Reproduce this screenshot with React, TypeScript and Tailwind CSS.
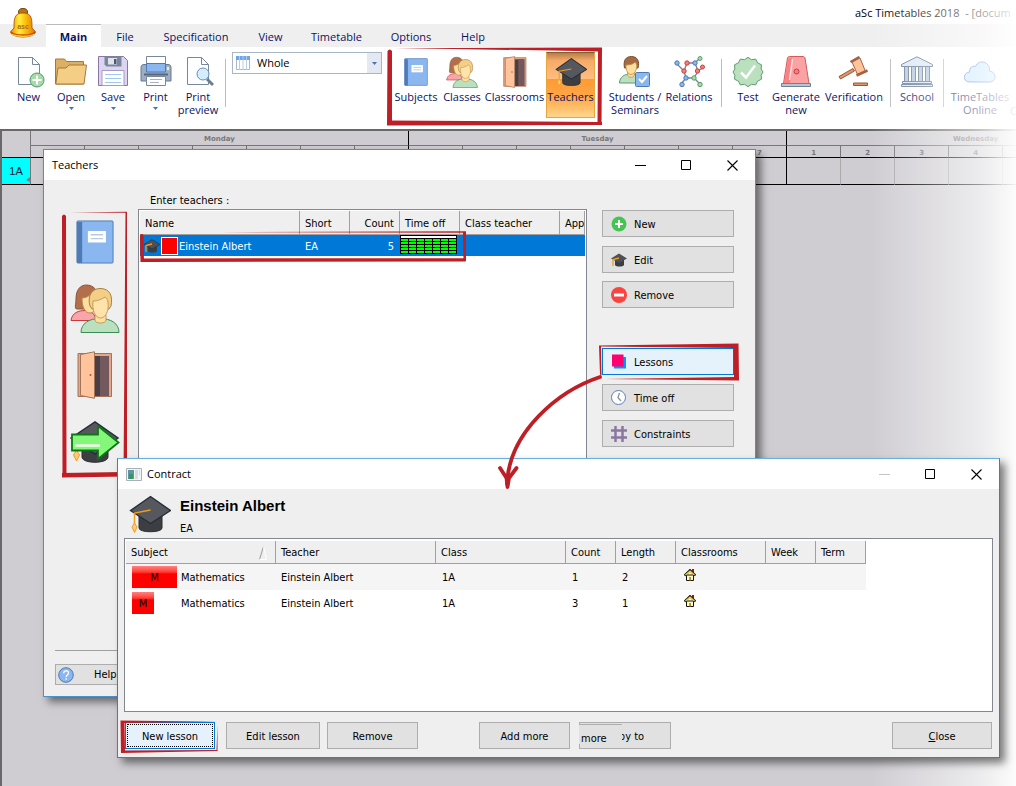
import type { ReactNode } from "react";

/* ---------- icons ---------- */

function CapIcon({ className }: { className: string }) {
  return (
    <svg viewBox="0 0 42 38" className={className} aria-hidden="true">
      <path d="M10 19v14c0 5 23 5 23 0V19z" fill="#3d3e42" stroke="#2c2d30" />
      <path d="M1.500 15.500 21.500 1.500l20 14-20 13z" fill="#56585d" stroke="#242e3a" strokeWidth="1.400" />
      <path d="M21.500 15 5.500 18v11" fill="none" stroke="#ef9c22" strokeWidth="1.400" />
      <path d="M5.500 28l-2.500 4 2.500 5.500 2.500-5.500z" fill="#ffc978" stroke="#ef9c22" />
    </svg>
  );
}

function SmallCapIcon({ className }: { className: string }) {
  return (
    <svg viewBox="0 0 16 16" className={className} aria-hidden="true">
      <path d="M4 8v5c1 2 8 2 9 0V8z" fill="#3d3e42" />
      <path d="M0 6.500 8 1.500l8 5-8 4.500z" fill="#4d5056" stroke="#242e3a" strokeWidth=".6" />
      <path d="M8 6 2 7.500V14" fill="none" stroke="#ef9c22" strokeWidth="1.300" />
    </svg>
  );
}

function BookIcon({ className }: { className: string }) {
  return (
    <svg viewBox="0 0 40 46" className={className} aria-hidden="true" preserveAspectRatio="none">
      <rect x="1" y="1" width="38" height="44" rx="1" fill="#8bb7f0" stroke="#4e7ab5" />
      <path d="M1 2h5.500v43H2l-1-1z" fill="#4e7ab5" />
      <path d="M12.500 11.500h19v12h-19z" fill="#fff" />
      <path d="M15.500 15.500h13M15.500 19.500h13" stroke="#b9c9de" strokeWidth="1.500" />
    </svg>
  );
}

function PeopleIcon({ className }: { className: string }) {
  return (
    <svg viewBox="0 0 50 50" className={className} aria-hidden="true">
      <path d="M1 37.500c1-8 8-10 14-10s10 3 11 10z" fill="#f8a6a9" stroke="#c8383d" />
      <path d="M7 26c-3 0-1-4-1-10C6 7 10 2 16.500 2S28 7 28 14v12z" fill="#b36f4b" stroke="#8a5638" />
      <path d="M12 15c4 0 7-2 9-4l6 5v8c-2 4-4 6-7 6-5 0-8-6-8-15z" fill="#ffdfa0" stroke="#b98b4a" />
      <path d="M11 49.500c0-9 8-14 19-14s19 5 19 14z" fill="#bae0bd" stroke="#3d8b58" />
      <path d="M25 32v5c0 4 11 4 11 0v-5z" fill="#ffdfa0" stroke="#b98b4a" strokeWidth=".8" />
      <path d="M20 23c-3-10 2-18 11-17.500C40 6 43 13 41 23l-2 3H22z" fill="#f5ce85" stroke="#a5824a" />
      <path d="M23 18c5 0 9-2 12-4 2 1 3 3 3 6 1 7-2 15-7.500 15C25 35 22 27 23 18z" fill="#ffe3ab" stroke="#b98b4a" strokeWidth=".8" />
    </svg>
  );
}

function DoorIcon({ className }: { className: string }) {
  return (
    <svg viewBox="0 0 36 48" className={className} aria-hidden="true" preserveAspectRatio="none">
      <path d="M1 2.500h33.500v43H1z" fill="#e5a685" stroke="#a1735a" />
      <path d="M17 5h15v40H17z" fill="#4a3e42" />
      <path d="M23 5h9v40h-9z" fill="#73595e" />
      <path d="M3.500 3.500 17.500.800v46.500L3.500 44.500z" fill="#ffc49c" stroke="#a1735a" />
      <circle cx="13.500" cy="24" r="1" fill="#9a5c43" />
    </svg>
  );
}

function ArrowCapIcon() {
  return (
    <svg viewBox="0 0 50 42" className="h-[42px] w-[50px]" aria-hidden="true">
      <path d="M12 20v16c0 7 26 7 26 0V20z" fill="#3d3e42" stroke="#2c2d30" />
      <path d="M1 17 25 1l23 16-23 16z" fill="#56585d" stroke="#242e3a" strokeWidth="1.500" />
      <path d="M6.500 29 3.500 34l3 6 3-6z" fill="#ffc978" stroke="#ef9c22" />
      <path d="M2 13.500h26V5l20.500 16.500L28 38v-8.500H2z" fill="#84f77a" stroke="#0b7812" strokeWidth="1.800" />
      <path d="M5 24.500h25" stroke="#f4fff2" strokeWidth="2.500" />
    </svg>
  );
}

function BellLogo() {
  return (
    <svg viewBox="0 0 26 30" className="h-[30px] w-[26px]" aria-hidden="true">
      <defs>
        <linearGradient id="bell" x1="0" x2="1">
          <stop offset="0" stopColor="#f08a00" />
          <stop offset=".35" stopColor="#fff03a" />
          <stop offset=".65" stopColor="#fbb40c" />
          <stop offset="1" stopColor="#d97a00" />
        </linearGradient>
      </defs>
      <ellipse cx="13" cy="4" rx="4.500" ry="3.500" fill="#b87414" stroke="#6f4510" />
      <path d="M4 20C4 11 4 5 13 5s9 6 9 15l3.300 3.500c1 3-5.500 5.500-12.300 5.500S-.200 26.500.700 23.500z" fill="url(#bell)" stroke="#a8480c" strokeWidth=".8" />
      <path d="M.900 24c4.600 4 19.500 4 24.200 0" fill="none" stroke="#c8500a" strokeWidth="1.300" />
      <path d="M2 26.500c5 2.500 17 2.500 22 0" fill="none" stroke="#ffcf3a" />
      <text x="13" y="20.500" textAnchor="middle" fontSize="7" fontWeight="700" fill="#b36a10" fontFamily="Liberation Sans, sans-serif">asc</text>
    </svg>
  );
}

function RibbonSvg({ children }: { children: ReactNode }) {
  return (
    <svg viewBox="0 0 32 32" className="h-8 w-8 shrink-0" aria-hidden="true">
      {children}
    </svg>
  );
}

const page = (
  <path d="M2.500 1.500h14l7 7v20h-21z M16.500 1.500v7h7" fill="#fdfeff" stroke="#78889a" />
);

const icons: Record<string, ReactNode> = {
  newDoc: (
    <RibbonSvg>
      <g transform="translate(3 0)">
        {page}
        <circle cx="21" cy="24" r="7" fill="#a9dba9" stroke="#4f9c68" />
        <path d="M21 19.500v9M16.500 24h9" stroke="#fff" strokeWidth="2" />
      </g>
    </RibbonSvg>
  ),
  open: (
    <RibbonSvg>
      <path d="M.500 28V3h9l2 2.500h17V28z" fill="#dbb065" stroke="#a5783a" />
      <path d="M.800 28 3 12h8l3-3h17.500L29 28z" fill="#f5ce85" stroke="#a5783a" />
    </RibbonSvg>
  ),
  save: (
    <RibbonSvg>
      <path d="M1.500.500h25l4 4v25h-29z" fill="#dcd5f2" stroke="#8b75a1" />
      <path d="M7.500.500h17v10h-15l-2-2z" fill="#78889a" />
      <path d="M11 2h9v6.500h-9z" fill="#dde4ee" />
      <path d="M17 3h2.500v5H17z" fill="#4b5a6c" />
      <path d="M5 14.500h22v15H5z" fill="#fff" stroke="#a99bc0" />
      <path d="M8 18.500h16M8 22.500h16M8 26.500h16" stroke="#9fc8f5" />
    </RibbonSvg>
  ),
  print: (
    <RibbonSvg>
      <path d="M6.500.500h19v8h-19z" fill="#fff" stroke="#78889a" />
      <path d="M4 8.500h24c2 0 3 1 3 3V25H1V11.500c0-2 1-3 3-3z" fill="#9baec4" stroke="#66798f" />
      <path d="M6.500 7.500h19v8.500h-19z" fill="#8bb7f0" stroke="#4e7ab5" />
      <path d="M4 18.500h24" stroke="#56687c" strokeWidth="2" />
      <path d="M6.500 20.500h19v9h-19z" fill="#fff" stroke="#78889a" />
      <path d="M10 23.500h12M10 26.500h9" stroke="#a5b3c2" />
      <path d="M27 11h2v3h-2z" fill="#ffeea3" />
    </RibbonSvg>
  ),
  preview: (
    <RibbonSvg>
      <g transform="translate(3 0)">
        {page}
        <path d="m22 23 6 6" stroke="#6d7d90" strokeWidth="3" />
        <circle cx="18" cy="18" r="6" fill="#d4edff" stroke="#6c8eb4" />
      </g>
    </RibbonSvg>
  ),
  students: (
    <RibbonSvg>
      <path d="M.500 27c0-6 5-9 11-9s11 3 11 9z" fill="#bae0bd" stroke="#5b9b70" />
      <path d="M8.500 15v4c1 3 6 3 7 0v-4z" fill="#ffdfa0" stroke="#b98b4a" strokeWidth=".7" />
      <path d="M5.500 12C4 4 7 .500 12.500.500S21 5 19 12z" fill="#a56a44" stroke="#7a4d30" />
      <path d="M7 9c4 0 8-1 9-3 2 2 2.500 5 1 8-1 3-3 4.500-5 4.500C9 18.500 6.500 14 7 9z" fill="#ffdf9c" stroke="#b98b4a" strokeWidth=".8" />
      <rect x="16.500" y="16.500" width="14" height="14" rx="1" fill="#8bb7f0" stroke="#4e7ab5" />
      <path d="m20 23 3 3 5-6" fill="none" stroke="#fff" strokeWidth="2" />
    </RibbonSvg>
  ),
  relations: (
    <RibbonSvg>
      <path d="M3 7l8 8M11 15l3-8h8l3 8-4 7h-8zM22 7l5-5M25 15l6-4M21 22l6 6M13 22l-5 6" fill="none" stroke="#7a828e" strokeWidth="1.300" />
      <g fill="#f47d80" stroke="#c74343">
        <circle cx="14" cy="7" r="2.200" /><circle cx="11" cy="15" r="2.200" /><circle cx="24.500" cy="15" r="2.200" /><circle cx="29.500" cy="11" r="2" />
      </g>
      <g fill="#8bb7f0" stroke="#4e7ab5">
        <circle cx="22" cy="7" r="2.200" /><circle cx="13" cy="22" r="2.200" /><circle cx="4" cy="7" r="2.200" /><circle cx="9" cy="28.500" r="2.200" />
      </g>
      <g fill="#a9dba9" stroke="#5b9b70">
        <circle cx="27" cy="2.500" r="2" /><circle cx="21" cy="22" r="2.200" /><circle cx="27" cy="28.500" r="2.200" />
      </g>
    </RibbonSvg>
  ),
  test: (
    <RibbonSvg>
      <path d="M16 1.300l3.500 2.400 4.200-.6 1.900 3.800 3.900 1.900-.4 4.200 1.900 3-1.900 3.200.4 4-3.900 1.900-1.900 3.800-4.200-.6L16 30.700l-3.500-2.400-4.200.6-1.900-3.800-3.900-1.900.4-4L1 16l1.900-3-.4-4.200 3.900-1.900 1.900-3.800 4.200.6z" fill="#bae0bd" stroke="#5e9c76" />
      <path d="m9 16.500 5 5 9-12" fill="none" stroke="#fff" strokeWidth="2.500" />
    </RibbonSvg>
  ),
  generate: (
    <RibbonSvg>
      <path d="M3.500 27.500 7.500 2c.3-1 1-1.500 2-1.500H23c1 0 1.700.500 2 1.500l4 25.500z" fill="#f9a3a5" stroke="#d45a5d" />
      <path d="M4 27 8 3l4-2-2 26z" fill="#fb8284" />
      <path d="M12.500 3 9.500 24" stroke="#fff" strokeWidth="1.500" opacity=".7" />
      <circle cx="16.500" cy="15.500" r="2.500" fill="#f47d80" stroke="#c83c40" />
      <path d="M1.500 27.500h29v3h-29z" fill="#b5c5d3" stroke="#6d8296" />
    </RibbonSvg>
  ),
  verification: (
    <RibbonSvg>
      <path d="M1 20.500 15 12.500l1.500 2.500L2.500 23z" fill="#e09467" stroke="#96593c" />
      <path d="m14 6 8-4 5.500 13.500-8 3z" fill="#ffc49c" stroke="#a16344" />
      <path d="M12.500 6 21.500 1M18.500 19.500l11-5" stroke="#a16344" strokeWidth="2.500" />
      <path d="M15.500 27h14v2.500h-14z" fill="#e09467" stroke="#96593c" />
    </RibbonSvg>
  ),
  school: (
    <RibbonSvg>
      <path d="M.500 8.500 16 .800l15.500 7.700v2H.500z" fill="#dce8f5" stroke="#6b7f96" />
      <g fill="#b6c9de" stroke="#6b7f96">
        <path d="M3.500 10.500h4v15h-4zM10.500 10.500h4v15h-4zM17.500 10.500h4v15h-4zM24.500 10.500h4v15h-4z" />
        <path d="M1.500 25.500h29v2h-29zM.500 28.500h31v2H.500z" fill="#dce8f5" />
      </g>
    </RibbonSvg>
  ),
  cloud: (
    <RibbonSvg>
      <path d="M6 26c-7.500 0-7.500-9-.500-10 0-4.500 3-6.500 6-5.500 3.500-8 14.500-5 14 4.500 7.500 1 7.500 11 0 11z" fill="#c4e6ff" stroke="#5a86c8" />
    </RibbonSvg>
  ),
  subjects: <BookIcon className="my-0.5 h-7 w-6" />,
  classes: <PeopleIcon className="h-8 w-8" />,
  classrooms: <DoorIcon className="h-8 w-6" />,
  teachers: <CapIcon className="h-8 w-8" />,
};

function HouseIcon() {
  return (
    <svg viewBox="0 0 12 12" className="h-3 w-3" aria-hidden="true">
      <path d="M2.500 6h7v5.500h-7z" fill="#fffbd0" stroke="#111" />
      <path d="M8 0h2v4L8 2z" fill="#a01818" />
      <path d="M.500 6.500 6 1.200l5.500 5.300" fill="none" stroke="#111" strokeWidth="2.200" />
      <path d="M1.500 6 6 2l4.500 4" fill="none" stroke="#f5dc2c" strokeWidth="1.300" />
      <path d="M5.200 8h1.800v3.500H5.200z" fill="#c9890b" />
    </svg>
  );
}

/* ---------- ribbon ---------- */

type RibbonItem = { icon: string; label: string; size: string; menu?: boolean; active?: boolean };

function RibbonButton({ icon, label, size, menu, active }: RibbonItem) {
  const look = active
    ? "border-[#e8a53c] border-t-[#7b6233] bg-[linear-gradient(#b97c48_0%,#f5ab69_12%,#ffbd80_40%,#ff9a33_41%,#ffa848_70%,#ffd58c_100%)]"
    : "border-transparent";
  return (
    <button
      type="button"
      className={`flex h-[66px] shrink-0 flex-col items-center border pt-[3px] text-[11px] leading-[13px] text-[#0b1263] ${size} ${look}`}
    >
      {icons[icon]}
      <span className="mt-0.5 text-center whitespace-pre">{label}</span>
      {menu && (
        <svg viewBox="0 0 5 3" className="mt-1 h-[3px] w-[5px]" aria-hidden="true">
          <path d="M0 0h5L2.500 3z" fill="#4872b8" />
        </svg>
      )}
    </button>
  );
}

function Separator() {
  return <div className="mx-1.5 mt-[7px] h-12 w-px shrink-0 bg-[#bcbcbc]" />;
}

const fileItems: RibbonItem[] = [
  { icon: "newDoc", label: "New", size: "w-[43px]" },
  { icon: "open", label: "Open", size: "w-[42px]", menu: true },
  { icon: "save", label: "Save", size: "w-[42px]", menu: true },
  { icon: "print", label: "Print", size: "w-[43px]", menu: true },
  { icon: "preview", label: "Print\npreview", size: "w-[42px]" },
];
const dataItems: RibbonItem[] = [
  { icon: "subjects", label: "Subjects", size: "w-[50px]" },
  { icon: "classes", label: "Classes", size: "w-[42px]" },
  { icon: "classrooms", label: "Classrooms", size: "w-[63px]" },
  { icon: "teachers", label: "Teachers", size: "w-[49px]", active: true },
];
const peopleItems: RibbonItem[] = [
  { icon: "students", label: "Students /\nSeminars", size: "w-[56px]" },
  { icon: "relations", label: "Relations", size: "w-[52px]" },
];
const runItems: RibbonItem[] = [
  { icon: "test", label: "Test", size: "w-[40px]" },
  { icon: "generate", label: "Generate\nnew", size: "w-[56px]" },
  { icon: "verification", label: "Verification", size: "w-[60px]" },
];

function Ribbon() {
  return (
    <div className="flex h-[82px] overflow-hidden bg-white pt-[5px] pl-[7px]">
      {fileItems.map((i) => <RibbonButton key={i.label} {...i} />)}
      <Separator />
      <label className="flex h-[22px] w-[150px] shrink-0 items-center border border-[#a9b6ca] text-[11px]">
        <svg viewBox="0 0 14 14" className="ml-[3px] h-3.5 w-3.5 shrink-0" aria-hidden="true">
          <path d="M.500.500h13v13H.500z" fill="#fff" stroke="#a8b8c8" />
          <path d="M0 0h14v4H0z" fill="#6aa6e8" />
          <path d="M3.500 0v14M7 0v14M10.500 0v14" stroke="#b9cde2" />
        </svg>
        <select aria-label="View" className="ml-[7px] min-w-0 flex-1 appearance-none bg-transparent text-[#000]">
          <option>Whole</option>
        </select>
        <span className="flex h-full w-3.5 items-center justify-center bg-[#e3e8f1]">
          <svg viewBox="0 0 5 3" className="h-[3px] w-[5px]" aria-hidden="true">
            <path d="M0 0h5L2.500 3z" fill="#4872b8" />
          </svg>
        </span>
      </label>
      <div className="ml-[9px] flex shrink-0">
        {dataItems.map((i) => <RibbonButton key={i.label} {...i} />)}
      </div>
      <div className="ml-3 flex shrink-0">
        {peopleItems.map((i) => <RibbonButton key={i.label} {...i} />)}
      </div>
      <Separator />
      {runItems.map((i) => <RibbonButton key={i.label} {...i} />)}
      <Separator />
      <RibbonButton icon="school" label="School" size="w-[40px]" />
      <Separator />
      <RibbonButton icon="cloud" label={"TimeTables\nOnline"} size="w-[60px]" />
      <button type="button" className="h-[66px] shrink-0 pt-[51px] text-[11px] leading-[13px] text-[#0b1263]">C</button>
    </div>
  );
}

/* ---------- timetable ---------- */

const days = ["Monday", "Tuesday", "Wednesday"];
const periods = [1, 2, 3, 4, 5, 6, 7];

function Timetable() {
  return (
    <div className="flex-1 overflow-hidden border-t-2 border-l-2 border-[#686868] bg-[#cfcdd2]">
      <table className="w-[1163px] table-fixed border-separate border-spacing-0 font-['DejaVu_Sans'] text-[7px] leading-none font-bold text-[#777]">
        <colgroup>
          <col className="w-[29px]" />
          {days.map((d) => periods.map((p) => <col key={d + p} className="w-[54px]" />))}
        </colgroup>
        <thead>
          <tr className="h-[15px]">
            <th rowSpan={2} className="border-r border-b border-r-[#777] border-b-black p-0" />
            {days.map((d) => (
              <th key={d} colSpan={7} className="border-r border-b border-r-black border-b-[#777] p-0 pt-0.5">{d}</th>
            ))}
          </tr>
          <tr className="h-3">
            {days.map((d) =>
              periods.map((p) => (
                <th key={d + p} className={`border-r border-b border-b-black p-0 pt-[3px] ${p === 7 ? "border-r-black" : "border-r-[#777]"}`}>{p}</th>
              ))
            )}
          </tr>
        </thead>
        <tbody>
          <tr className="h-[27px]">
            <th className="border-r border-b border-r-[#777] border-b-black bg-[#0ff] p-0 font-['Liberation_Sans'] text-[11px] font-normal text-[#123]">
              <div className="relative flex h-[26px] items-center justify-center">
                1A
                <svg viewBox="0 0 4 5" className="absolute right-0 bottom-0.5 h-[5px] w-1" aria-hidden="true">
                  <path d="M4 0v5L0 3z" fill="#808080" />
                </svg>
              </div>
            </th>
            {days.map((d) =>
              periods.map((p) => (
                <td key={d + p} className={`border-r border-b border-b-black p-0 ${p === 7 ? "border-r-black" : "border-r-[#aaa]"}`} />
              ))
            )}
          </tr>
        </tbody>
      </table>
    </div>
  );
}

/* ---------- windows ---------- */

function WindowControls({ dimMin }: { dimMin?: boolean }) {
  return (
    <div className="ml-auto flex h-full">
      <button type="button" aria-label="Minimize" className="flex w-[46px] items-center justify-center">
        <svg viewBox="0 0 11 11" className="h-[11px] w-[11px]"><path d="M0 5.500h11" stroke={dimMin ? "#c4c4c4" : "#000"} /></svg>
      </button>
      <button type="button" aria-label="Maximize" className="flex w-[46px] items-center justify-center">
        <svg viewBox="0 0 11 11" className="h-[11px] w-[11px]"><path d="M.500.500h9v9h-9z" fill="none" stroke="#000" /></svg>
      </button>
      <button type="button" aria-label="Close window" className="flex w-[46px] items-center justify-center">
        <svg viewBox="0 0 11 11" className="h-[11px] w-[11px]"><path d="m.500.500 10 10m0-10-10 10" stroke="#000" strokeWidth="1.100" /></svg>
      </button>
    </div>
  );
}

const head = "border-r border-b border-[#a0a0a0] bg-[#efefef] p-0 pt-0.5 pl-[5px] text-left font-normal whitespace-nowrap overflow-hidden";

function TimeOffGrid() {
  return (
    <svg viewBox="0 0 57 19" className="h-[19px] w-[57px]" aria-hidden="true">
      <path d="M0 0h57v19H0z" fill="#000" />
      <path d="M1 1h55v2H1z" fill="#fff" />
      {[0, 1, 2, 3, 4].map((r) =>
        periods.map((c) => (
          <rect key={`${r}-${c}`} x={1 + (c - 1) * 8} y={4 + r * 3} width="7" height="2" fill="#0f0" />
        ))
      )}
    </svg>
  );
}

function SideButton({ label, gap, hot, children }: { label: string; gap: string; hot?: boolean; children: ReactNode }) {
  return (
    <button
      type="button"
      className={`flex h-[27px] items-center border pl-2 ${gap} ${hot ? "border-[#0078d7] bg-[#e5f1fb]" : "border-[#adadad] bg-[#e1e1e1]"}`}
    >
      <svg viewBox="0 0 16 16" className="mr-[7px] h-4 w-4" aria-hidden="true">{children}</svg>
      <span className="pt-0.5">{label}</span>
    </button>
  );
}

function TeachersWindow() {
  return (
    <section className="absolute top-[149px] left-[43px] w-[713px] border border-[#4a90cc] bg-[#efefef] shadow-[5px_5px_8px_rgba(0,0,0,0.5)]">
      <header className="flex h-[30px] items-center bg-white pl-2 font-['Open_Sans']">
        <h2 className="text-[11px]">Teachers</h2>
        <WindowControls />
      </header>
      <div className="flex">
        <nav className="flex w-[94px] shrink-0 flex-col items-center pt-[39px] pl-2">
          <button type="button" aria-label="Subjects" className="py-px"><BookIcon className="h-11 w-[38px]" /></button>
          <button type="button" aria-label="Classes" className="mt-[18px]"><PeopleIcon className="h-[50px] w-[50px]" /></button>
          <button type="button" aria-label="Classrooms" className="mt-[18px]"><DoorIcon className="h-12 w-9" /></button>
          <button type="button" aria-label="Teachers" className="mt-[22px]"><ArrowCapIcon /></button>
        </nav>
        <div className="min-w-0 flex-1 pt-[13px]">
          <p className="h-4 pl-3 leading-4">Enter teachers :</p>
          <div className="h-[431px] overflow-hidden border border-[#828790] bg-white px-px pt-px">
            <table className="w-full table-fixed border-separate border-spacing-0">
              <colgroup>
                <col className="w-[160px]" /><col className="w-[50px]" /><col className="w-[50px]" />
                <col className="w-[60px]" /><col className="w-[100px]" /><col />
              </colgroup>
              <thead>
                <tr className="h-6">
                  <th className={head}>Name</th>
                  <th className={head}>Short</th>
                  <th className={`${head} pr-[5px] text-right!`}>Count</th>
                  <th className={head}>Time off</th>
                  <th className={head}>Class teacher</th>
                  <th className={head}>App</th>
                </tr>
              </thead>
              <tbody>
                <tr className="h-[21px] bg-[#0078d7] text-white">
                  <td className="p-0">
                    <div className="flex items-center pl-1 whitespace-nowrap">
                      <SmallCapIcon className="h-4 w-4" />
                      <span className="mr-px ml-px h-[18px] w-[17px] border border-white bg-[#f00]" />
                      <span className="pt-0.5">Einstein Albert</span>
                    </div>
                  </td>
                  <td className="p-0 pt-0.5 pl-[5px]">EA</td>
                  <td className="p-0 pt-0.5 pr-1.5 text-right">5</td>
                  <td className="p-0 align-top"><TimeOffGrid /></td>
                  <td className="p-0" />
                  <td className="p-0" />
                </tr>
              </tbody>
            </table>
          </div>
        </div>
        <div className="mr-[21px] ml-[15px] flex w-[132px] shrink-0 flex-col pt-[30px]">
          <SideButton label="New" gap="mt-0">
            <circle cx="8" cy="8" r="7.500" fill="#45c353" /><path d="M8 4v8M4 8h8" stroke="#fff" strokeWidth="2" />
          </SideButton>
          <SideButton label="Edit" gap="mt-[9px]">
            <path d="M4 8v5c1 2 8 2 9 0V8z" fill="#3d3e42" />
            <path d="M0 6.500 8 1.500l8 5-8 4.500z" fill="#4d5056" />
            <path d="M8 6 2 7.500V14" fill="none" stroke="#ef9c22" strokeWidth="1.300" />
          </SideButton>
          <SideButton label="Remove" gap="mt-2">
            <circle cx="8" cy="8" r="8" fill="#fb4340" /><path d="M3 6.500h10v3H3z" fill="#fff" />
          </SideButton>
          <SideButton label="Lessons" gap="mt-[40px]" hot>
            <path d="M3 3h12v11.500H3z" fill="#0096ff" /><path d="M1 0.500h11.500v12H1z" fill="#ff006e" />
          </SideButton>
          <SideButton label="Time off" gap="mt-[9px]">
            <circle cx="7.500" cy="7.500" r="7" fill="#fff" stroke="#5a7fb8" /><path d="M8.500 3 7 7.500l3 3.500" fill="none" stroke="#8b93a0" strokeWidth="1.300" />
          </SideButton>
          <SideButton label="Constraints" gap="mt-[9px]">
            <path d="M4.500 0v16M11.500 0v16M0 4.500h16M0 11.500h16" stroke="#8b75a1" strokeWidth="2.500" />
          </SideButton>
        </div>
      </div>
      <footer className="mx-[11px] mt-2.5 border-t border-[#a0a0a0] pb-[11px]">
        <button type="button" className="mt-[13px] flex h-[21px] w-[94px] items-center border border-[#adadad] bg-[#e1e1e1] pl-0.5">
          <svg viewBox="0 0 16 16" className="mr-5 h-4 w-4" aria-hidden="true">
            <circle cx="8" cy="8" r="7.300" fill="#8bb7f0" stroke="#4e7ab5" />
            <path d="M5.700 6.200C5.700 3 10.500 3 10.500 6c0 2-2.300 2-2.300 4M8.200 11.300v1.500" fill="none" stroke="#fff" strokeWidth="1.300" />
          </svg>
          Help
        </button>
      </footer>
    </section>
  );
}

const lessons = [
  { block: "w-[45px]", count: 1, length: 2, row: "bg-[#f5f5f5]" },
  { block: "w-[22px]", count: 3, length: 1, row: "bg-white" },
];

const push = "h-[27px] border border-[#adadad] bg-[#e1e1e1] pt-0.5";

function ContractWindow() {
  return (
    <section className="absolute top-[458px] right-4 left-[117px] border border-[#2b84cc] border-t-[#6aaee2] bg-[#efefef] shadow-[5px_5px_8px_rgba(0,0,0,0.5)]">
      <header className="flex h-[30px] items-center bg-white pl-2 font-['Open_Sans']">
        <svg viewBox="0 0 16 13" className="mr-[5px] h-[13px] w-4" aria-hidden="true">
          <path d="M.500.500h15v12H.500z" fill="#f4f4f4" stroke="#a8b0b8" />
          <path d="M2 2h6v9H2z" fill="#5a98a0" /><path d="M3 6h4v5H3z" fill="#3f9268" /><path d="M9 2h3v9H9zM13 2h1v5h-1z" fill="#d5dde3" />
        </svg>
        <h2 className="text-[11px]">Contract</h2>
        <WindowControls dimMin />
      </header>
      <div className="flex h-[49px] pt-1.5 pl-[11px]">
        <CapIcon className="h-[38px] w-[42px]" />
        <div className="pl-[9px]">
          <h1 className="h-[26px] font-['Liberation_Sans'] text-[15px] leading-[22px] font-bold">Einstein Albert</h1>
          <p className="leading-4">EA</p>
        </div>
      </div>
      <div className="mx-1.5 h-[174px] border border-[#828790] bg-white pt-0.5 pl-px">
        <table className="w-[740px] table-fixed border-separate border-spacing-0">
          <colgroup>
            <col className="w-[150px]" /><col className="w-[160px]" /><col className="w-[130px]" /><col className="w-[50px]" />
            <col className="w-[60px]" /><col className="w-[90px]" /><col className="w-[50px]" /><col className="w-[50px]" />
          </colgroup>
          <thead>
            <tr className="h-[23px]">
              <th className={head}>
                <div className="flex items-center justify-between pr-2">
                  Subject
                  <svg viewBox="0 0 8 14" className="h-3.5 w-2" aria-hidden="true">
                    <path d="M.500 13.500 4.500.500" stroke="#999" /><path d="m4.500.500 3 13H.500" fill="none" stroke="#fff" />
                  </svg>
                </div>
              </th>
              {["Teacher", "Class", "Count", "Length", "Classrooms", "Week", "Term"].map((h) => (
                <th key={h} className={head}>{h}</th>
              ))}
            </tr>
          </thead>
          <tbody>
            {lessons.map((l) => (
              <tr key={l.count} className={`h-[26px] ${l.row}`}>
                <td className="p-0 pl-1.5">
                  <div className="flex items-center">
                    <span className="w-[49px]">
                      <span className={`block h-[22px] bg-linear-to-b from-[#ff8080] to-[#f00] to-35% pt-px text-center leading-[22px] ${l.block}`}>M</span>
                    </span>
                    <span className="pt-0.5">Mathematics</span>
                  </div>
                </td>
                <td className="p-0 pt-0.5 pl-[5px]">Einstein Albert</td>
                <td className="p-0 pt-0.5 pl-1.5">1A</td>
                <td className="p-0 pt-0.5 pl-1.5">{l.count}</td>
                <td className="p-0 pt-0.5 pl-1.5">{l.length}</td>
                <td className="p-0 pb-1 pl-2"><HouseIcon /></td>
                <td className="p-0" />
                <td className="p-0" />
              </tr>
            ))}
          </tbody>
        </table>
      </div>
      <footer className="flex pt-[10px] pr-[7px] pb-2 pl-[7px]">
        <button type="button" className="h-[27px] w-[90px] border border-[#0078d7] bg-[#e5f1fb] p-px">
          <span className="flex h-full items-center justify-center border border-dotted border-black pt-0.5">New lesson</span>
        </button>
        <button type="button" className={`${push} ml-[11px] w-[94px]`}>Edit lesson</button>
        <button type="button" className={`${push} ml-[7px] w-[91px]`}>Remove</button>
        <button type="button" className={`${push} ml-[61px] w-[91px]`}>Add more</button>
        <div className="relative ml-[9px]">
          <button type="button" className={`${push} w-[92px]`}>Copy to</button>
          <span className="absolute top-[2px] left-0 h-5 w-[43px] border-t border-[#adadad] bg-[#e1e1e1] pt-0.5 pl-0.5 leading-6">more</span>
        </div>
        <button type="button" className={`${push} ml-auto w-[100px]`}><u>C</u>lose</button>
      </footer>
    </section>
  );
}

/* ---------- hand-drawn highlights ---------- */

function StripHighlight() {
  return (
    <svg viewBox="0 0 70 270" className="pointer-events-none absolute top-[210px] left-[60px] h-[270px] w-[70px]" aria-hidden="true">
      <path d="M2 6q2-3 4 0l.5 261H2.500zM2 263l60-1 5 1v3.500L2 267.500zM10 2.500l57-.8v265h-3.500L65.500 2.700z" fill="#be1e25" />
    </svg>
  );
}

function Highlights() {
  return (
    <svg viewBox="0 0 1016 786" className="pointer-events-none absolute top-0 left-0 h-[786px] w-[1016px]" aria-hidden="true">
      <g fill="#be1e25">
        <path d="M387.500 51q2-3 4.500 0v74h-5z M387 120.500l211 1.500h4v3l-215 .500z M395 48.200l207-.7-.5 77h-4l.5-73q-100-2-203-3.300z" />
        <path d="M140 235q2-2 3.500 0l.5 27h-3.500z M141 258.500l324-.5v3.500l-324 .500z M220 232.200l246-1v30h-2.500l-.5-28.500z" />
        <path d="M599 345.500l139.500-2 .5 37-134-1.500 129-2-.5-29-132.500-1.500.5 29-1.500-1z" />
        <path d="M120.500 720.500l97 1.200-93 1.300.5 27.500 91.500-.500 1-25.500v26.500l-96.500 2z" />
      </g>
      <path d="M600 377C558 391 509 432 507 484" fill="none" stroke="#be1e25" strokeWidth="3.800" strokeLinecap="round" />
      <path d="M500 468l6.500 10 1 9 1.500-9 7.500-10" fill="none" stroke="#be1e25" strokeWidth="3.800" strokeLinejoin="round" strokeLinecap="round" />
    </svg>
  );
}

/* ---------- page ---------- */

export default function App() {
  return (
    <div className="relative flex min-h-screen flex-col overflow-hidden bg-white font-['DejaVu_Sans_Condensed','Liberation_Sans',sans-serif] text-[11px] leading-4 text-black">
      <div className="flex min-h-0 flex-1 flex-col font-['Open_Sans',sans-serif]">
        <div className="flex h-6 items-center justify-end overflow-hidden bg-white">
          <span className="w-[161px] shrink-0 pt-0.5 text-[11px] whitespace-pre">aSc Timetables 2018  - [docum</span>
        </div>
        <nav className="flex h-[23px] items-stretch bg-[#efefef] text-[11px] text-[#0b1263]">
          <div className="-mt-4 w-[46px] pl-2.5"><BellLogo /></div>
          <a href="#main" className="flex w-[55px] items-center justify-center border-t border-[#bbb] bg-white pt-0.5 font-bold">Main</a>
          {[
            ["File", "w-[48px]"],
            ["Specification", "w-[94px]"],
            ["View", "w-[55px]"],
            ["Timetable", "w-[77px]"],
            ["Options", "w-[72px]"],
            ["Help", "w-[52px]"],
          ].map(([t, w]) => (
            <a key={t} href={`#${t.toLowerCase()}`} className={`flex items-center justify-center pt-[3px] ${w}`}>{t}</a>
          ))}
        </nav>
        <Ribbon />
        <Timetable />
      </div>
      <div className="pointer-events-none absolute inset-y-0 right-0 w-[146px] bg-linear-to-r from-white/0 via-white/60 via-75% to-white/95" />
      <TeachersWindow />
      <StripHighlight />
      <ContractWindow />
      <Highlights />
    </div>
  );
}
